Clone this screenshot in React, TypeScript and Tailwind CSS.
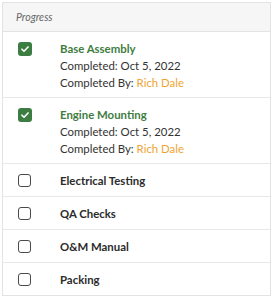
type Step = {
  title: string;
  done: boolean;
  date?: string;
  by?: string;
};

const steps: Step[] = [
  { title: "Base Assembly", done: true, date: "Oct 5, 2022", by: "Rich Dale" },
  { title: "Engine Mounting", done: true, date: "Oct 5, 2022", by: "Rich Dale" },
  { title: "Electrical Testing", done: false },
  { title: "QA Checks", done: false },
  { title: "O&M Manual", done: false },
  { title: "Packing", done: false },
];

const CheckBox = ({ checked }: { checked: boolean }) =>
  checked ? (
    <span className="flex h-[14px] w-[14px] items-center justify-center rounded-[3px] bg-[#3c7d42]">
      <svg viewBox="0 0 12 12" className="h-[10px] w-[10px]">
        <path
          d="M2.3 6.3 L4.8 8.7 L9.7 3.6"
          fill="none"
          stroke="white"
          strokeWidth="2"
          strokeLinecap="round"
          strokeLinejoin="round"
        />
      </svg>
    </span>
  ) : (
    <span className="block h-[13px] w-[13px] rounded-[3px] border-[1.5px] border-[#4a4a4a]" />
  );

export default function App() {
  return (
    <div
      className="ml-[2px] mt-[2px] w-[269px] border border-[#e3e3e3] bg-white text-[11.4px] leading-[17px] text-[#333]"
      style={{ fontFamily: "Lato, 'Open Sans', sans-serif" }}
    >
      {/* Header */}
      <div className="flex h-[29px] items-center border-b border-[#e3e3e3] bg-[#f6f6f6] pl-[13px] text-[10.5px] italic text-[#666]">
        Progress
      </div>

      {/* Steps */}
      {steps.map((step) => (
        <div
          key={step.title}
          className={`flex border-b border-[#e8e8e8] pl-[15px] last:border-b-0 ${
            step.done ? "pb-[6px] pt-2" : "pb-[7px] pt-2"
          }`}
        >
          <div className="flex h-[17px] w-[42px] shrink-0 items-center">
            <CheckBox checked={step.done} />
          </div>
          <div>
            <p
              className={`font-bold ${
                step.done ? "text-[#3f7d3f]" : "text-[#2b2b2b]"
              }`}
            >
              {step.title}
            </p>
            {step.done && (
              <>
                <p>Completed: {step.date}</p>
                <p>
                  Completed By: <span className="text-[#f0a332]">{step.by}</span>
                </p>
              </>
            )}
          </div>
        </div>
      ))}
    </div>
  );
}
